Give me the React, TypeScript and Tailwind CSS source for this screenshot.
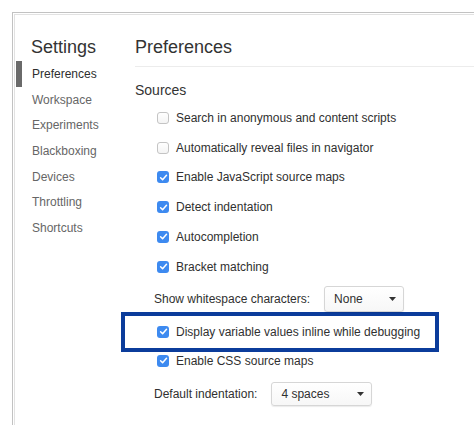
import React from 'react';

const font = { fontFamily: '"Liberation Sans", Arial, sans-serif' };

const sections = ['Preferences', 'Workspace', 'Experiments', 'Blackboxing', 'Devices', 'Throttling', 'Shortcuts'];

const topOptions = [
  { label: 'Search in anonymous and content scripts', checked: false },
  { label: 'Automatically reveal files in navigator', checked: false },
  { label: 'Enable JavaScript source maps', checked: true },
  { label: 'Detect indentation', checked: true },
  { label: 'Autocompletion', checked: true },
  { label: 'Bracket matching', checked: true },
];

function Checkbox({ checked }: { checked: boolean }) {
  if (!checked) {
    return <span className="w-[12px] h-[12px] shrink-0 rounded-[3px] border border-[#c4c4c4] bg-gradient-to-b from-white to-[#f4f4f4]" />;
  }
  return (
    <span className="w-[12px] h-[12px] shrink-0 rounded-[3px] bg-[#3d8af0] flex items-center justify-center">
      <svg width="9" height="9" viewBox="0 0 9 9" fill="none">
        <path d="M1.6 4.7 L3.6 6.7 L7.5 2.2" stroke="white" strokeWidth="1.5" strokeLinecap="round" strokeLinejoin="round" />
      </svg>
    </span>
  );
}

function Select({ value, width, height }: { value: string; width: string; height: string }) {
  return (
    <div className={`${width} ${height} flex items-center justify-between pl-[9px] pr-[7px] rounded-[3px] border border-[#d6d6d6] bg-gradient-to-b from-white to-[#f7f7f7] shadow-[0_1px_1px_rgba(0,0,0,0.08)]`}>
      <span className="text-[12px] text-[#303030]">{value}</span>
      <svg width="7" height="4" viewBox="0 0 7 4">
        <path d="M0 0 H7 L3.5 4 Z" fill="#333" />
      </svg>
    </div>
  );
}

function OptionRow({ label, checked }: { label: string; checked: boolean }) {
  return (
    <div className="h-[29.75px] flex items-center gap-[7px] pl-[22px]">
      <Checkbox checked={checked} />
      <span className="text-[12px] leading-[16px] text-[#303030]">{label}</span>
    </div>
  );
}

export default function App() {
  return (
    <div className="w-[474px] h-[425px] bg-white overflow-hidden pt-[12px] pl-[12px]" style={font}>
      <div className="h-full border-l border-t border-[#c2c2c2] pl-px pt-px">
        <div className="h-full border-l border-t border-[#e2e2e2] flex">
          <aside className="w-[120px] shrink-0">
            <h1 className="pt-[20px] pl-[16px] text-[18px] leading-[24px] text-[#333]">Settings</h1>
            <nav className="mt-[2px]">
              {sections.map((s, i) => (
                <div key={s} className="h-[25.7px] flex items-center">
                  <span className={`ml-px w-[6px] h-full ${i === 0 ? 'bg-[#6a6a6a]' : ''}`} />
                  <span className={`ml-[10px] text-[12px] ${i === 0 ? 'text-[#2e2e2e]' : 'text-[#666]'}`}>{s}</span>
                </div>
              ))}
            </nav>
          </aside>

          <main className="flex-1">
            <header className="pt-[20px] pb-[7px] border-b border-[#ececec]">
              <h2 className="text-[18px] leading-[24px] text-[#333]">Preferences</h2>
            </header>
            <h3 className="mt-[14px] text-[14px] leading-[18px] text-[#333]">Sources</h3>

            <div className="mt-[4px]">
              {topOptions.map((o) => (
                <OptionRow key={o.label} {...o} />
              ))}
            </div>

            <div className="mt-[4px] h-[26px] flex items-center pl-[19px] gap-[14px]">
              <span className="text-[12px] text-[#303030]">Show whitespace characters:</span>
              <Select value="None" width="w-[80px]" height="h-[26px]" />
            </div>

            <div className="-ml-[14px] w-[318px] h-[40px] border-[4px] border-[#0b3c9b] flex items-center gap-[7px] pl-[32px]">
              <Checkbox checked />
              <span className="text-[12px] leading-[16px] text-[#303030]">Display variable values inline while debugging</span>
            </div>

            <div className="h-[18px] flex items-center gap-[7px] pl-[22px]">
              <Checkbox checked />
              <span className="text-[12px] leading-[16px] text-[#303030]">Enable CSS source maps</span>
            </div>

            <div className="mt-[12px] h-[24px] flex items-center pl-[19px] gap-[14px]">
              <span className="text-[12px] text-[#303030]">Default indentation:</span>
              <Select value="4 spaces" width="w-[101px]" height="h-[24px]" />
            </div>
          </main>
        </div>
      </div>
    </div>
  );
}
